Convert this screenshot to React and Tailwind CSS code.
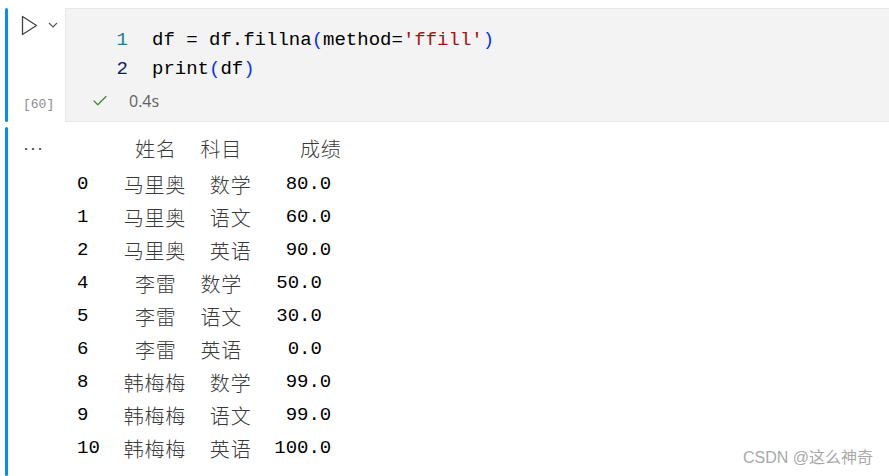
import { Check } from 'lucide-react';

const MONO = "font-['Consolas','Liberation_Mono',monospace]";

// each cell of a pandas row: t = text, c = true for CJK (wider font)
const header = [
  { t: '     ' }, { t: '姓名', c: true }, { t: '  ' }, { t: '科目', c: true }, { t: '     ' }, { t: '成绩', c: true },
];

const rows = [
  ['0 ', '马里奥', '数学', ' 80.0'],
  ['1 ', '马里奥', '语文', ' 60.0'],
  ['2 ', '马里奥', '英语', ' 90.0'],
  ['4 ', ' 李雷', '数学', ' 50.0'],
  ['5 ', ' 李雷', '语文', ' 30.0'],
  ['6 ', ' 李雷', '英语', '  0.0'],
  ['8 ', '韩梅梅', '数学', ' 99.0'],
  ['9 ', '韩梅梅', '语文', ' 99.0'],
  ['10', '韩梅梅', '英语', '100.0'],
];

const Cjk = ({ children }) => (
  <span className="text-[20px] tracking-[0.8px] pl-[1px] text-[#3a3a3a] font-light font-['Noto_Sans_CJK_SC',sans-serif]">{children}</span>
);

const Row = ({ r }) => {
  const lead = r[1].startsWith(' ') ? ' ' : '';
  const name = r[1].trim();
  return (
    <div className="h-[33px] flex items-center whitespace-pre">
      <span>{r[0]}  {lead}</span>
      <Cjk>{name}</Cjk>
      <span>  </span>
      <Cjk>{r[2]}</Cjk>
      <span>  {r[3]}</span>
    </div>
  );
};

export default function App() {
  return (
    <div className="w-[889px] h-[476px] bg-white overflow-hidden relative">
      <div className="h-[8px]" />
      {/* input cell */}
      <div className="flex h-[114px]">
        <div className="w-[5px]" />
        <div className="w-[3px] bg-[#0090f1] rounded-sm" />
        <div className="w-[57px] flex flex-col">
          <div className="flex items-center pl-[13px] pt-[7px] gap-[10px]">
            <svg width="17" height="21" viewBox="0 0 17 21" fill="none">
              <path d="M1.5 1.5 L15.5 10.5 L1.5 19.5 Z" stroke="#424242" strokeWidth="1.3" strokeLinejoin="round" />
            </svg>
            <svg width="10" height="6" viewBox="0 0 10 6" fill="none" className="mt-[-1px]">
              <path d="M1 1 L5 5 L9 1" stroke="#555" strokeWidth="1.1" />
            </svg>
          </div>
          <div className="mt-auto mb-[8px] pl-[15px] text-[13px] text-[#8c8c8c] font-['Liberation_Mono',monospace]">[60]</div>
        </div>
        <div className="flex-1 bg-[#f3f3f3] border-t border-l border-b border-[#e8e8e8] flex flex-col">
          <div className={`pt-[17px] ${MONO} text-[19px] leading-[29px] whitespace-pre`}>
            <div className="flex">
              <span className="w-[86px] text-right pr-[24px] text-[#237893]">1</span>
              <span className="text-black">df = df.fillna<span className="text-[#0431fa]">(</span>method=<span className="text-[#a31515]">'ffill'</span><span className="text-[#0431fa]">)</span></span>
            </div>
            <div className="flex">
              <span className="w-[86px] text-right pr-[24px] text-[#0b216f]">2</span>
              <span className="text-black">print<span className="text-[#0431fa]">(</span>df<span className="text-[#0431fa]">)</span></span>
            </div>
          </div>
          <div className="mt-auto mb-[8px] flex items-center pl-[25px]">
            <Check size={18} strokeWidth={1.6} className="text-[#388a34]" />
            <span className="ml-[20px] text-[16px] text-[#616161] font-['Open_Sans',sans-serif]">0.4s</span>
          </div>
        </div>
      </div>
      <div className="h-[5px]" />
      {/* output cell */}
      <div className="flex h-[349px]">
        <div className="w-[5px]" />
        <div className="w-[3px] bg-[#0090f1] rounded-sm" />
        <div className="w-[69px] pl-[15px] pt-[12px] text-[#424242] text-[18px] leading-[18px] tracking-[1px] font-['Liberation_Sans',sans-serif]">···</div>
        <div className={`${MONO} text-[19px] text-black pt-[2px]`}>
          <div className="h-[39px] flex items-center whitespace-pre">
            {header.map((h, i) => (h.c ? <Cjk key={i}>{h.t}</Cjk> : <span key={i}>{h.t}</span>))}
          </div>
          {rows.map((r) => (
            <Row key={r[0]} r={r} />
          ))}
        </div>
      </div>
      <div className="absolute right-[16px] bottom-[6px] text-[16px] text-[#a8a8a8] font-['Liberation_Sans','Noto_Sans_CJK_SC',sans-serif]">
        CSDN @这么神奇
      </div>
    </div>
  );
}
